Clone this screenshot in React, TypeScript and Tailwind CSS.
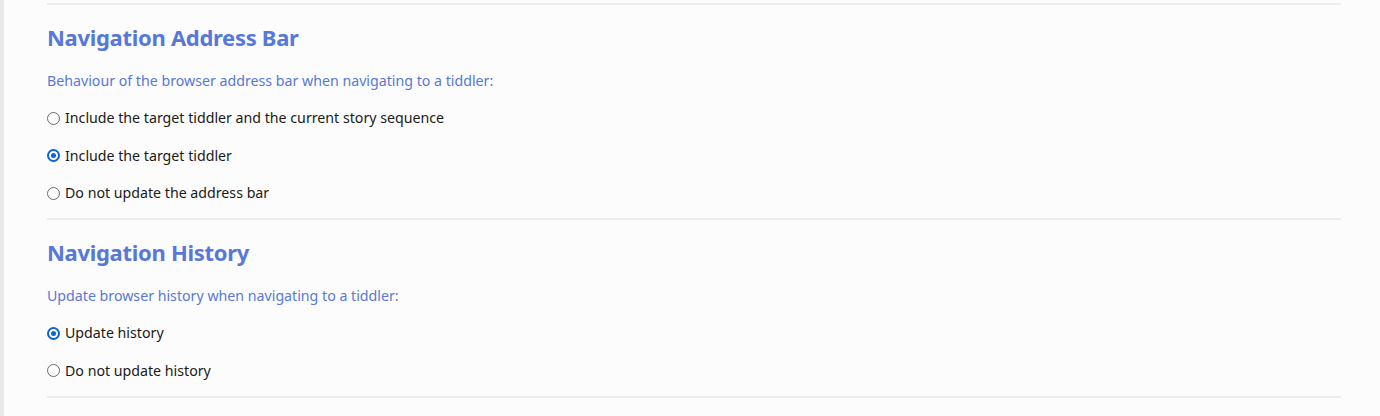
import { useState } from "react";

type Option = { value: string; label: string };

const addressOptions: Option[] = [
  { value: "permaview", label: "Include the target tiddler and the current story sequence" },
  { value: "permalink", label: "Include the target tiddler" },
  { value: "no", label: "Do not update the address bar" },
];

const historyOptions: Option[] = [
  { value: "yes", label: "Update history" },
  { value: "no", label: "Do not update history" },
];

function Radio({ checked }: { checked: boolean }) {
  return checked ? (
    <span className="flex h-[13px] w-[13px] shrink-0 items-center justify-center rounded-full border-[2px] border-[#0b63d6] bg-white">
      <span className="h-[5px] w-[5px] rounded-full bg-[#0b63d6]" />
    </span>
  ) : (
    <span className="h-[13px] w-[13px] shrink-0 rounded-full border border-[#6b6b6b] bg-white" />
  );
}

function Setting({
  title,
  hint,
  options,
  value,
  onChange,
}: {
  title: string;
  hint: string;
  options: Option[];
  value: string;
  onChange: (v: string) => void;
}) {
  return (
    <section>
      <h2 className="mt-[16px] h-[32px] text-[22px] font-bold leading-[32px] tracking-[-0.3px] text-[#5778d8]">
        {title}
      </h2>
      <p className="mt-[18px] h-[20px] text-[14.2px] leading-[20px] text-[#5778d8]">{hint}</p>
      <div className="mt-[17px] flex flex-col gap-[17.5px]">
        {options.map((o) => (
          <label
            key={o.value}
            className="flex h-[20px] cursor-pointer items-center gap-[5px] text-[14.2px] leading-[20px] text-[#1a1a1a]"
            onClick={() => onChange(o.value)}
          >
            <Radio checked={value === o.value} />
            {o.label}
          </label>
        ))}
      </div>
      <div className="mb-[1px] mt-[15px] h-[2px] bg-[#ededed]" />
    </section>
  );
}

export default function App() {
  const [address, setAddress] = useState("permalink");
  const [history, setHistory] = useState("yes");

  return (
    <div
      className="flex h-[416px] w-full bg-[#fcfcfc]"
      style={{ fontFamily: '"Noto Sans", "Open Sans", sans-serif' }}
    >
      <div className="w-[4px] shrink-0 bg-[#e9e9e9]" />
      <div className="ml-[43px] w-[1294px]">
        <div className="mt-[3px] h-[2px] bg-[#ededed]" />
        <Setting
          title="Navigation Address Bar"
          hint="Behaviour of the browser address bar when navigating to a tiddler:"
          options={addressOptions}
          value={address}
          onChange={setAddress}
        />
        <Setting
          title="Navigation History"
          hint="Update browser history when navigating to a tiddler:"
          options={historyOptions}
          value={history}
          onChange={setHistory}
        />
      </div>
    </div>
  );
}
